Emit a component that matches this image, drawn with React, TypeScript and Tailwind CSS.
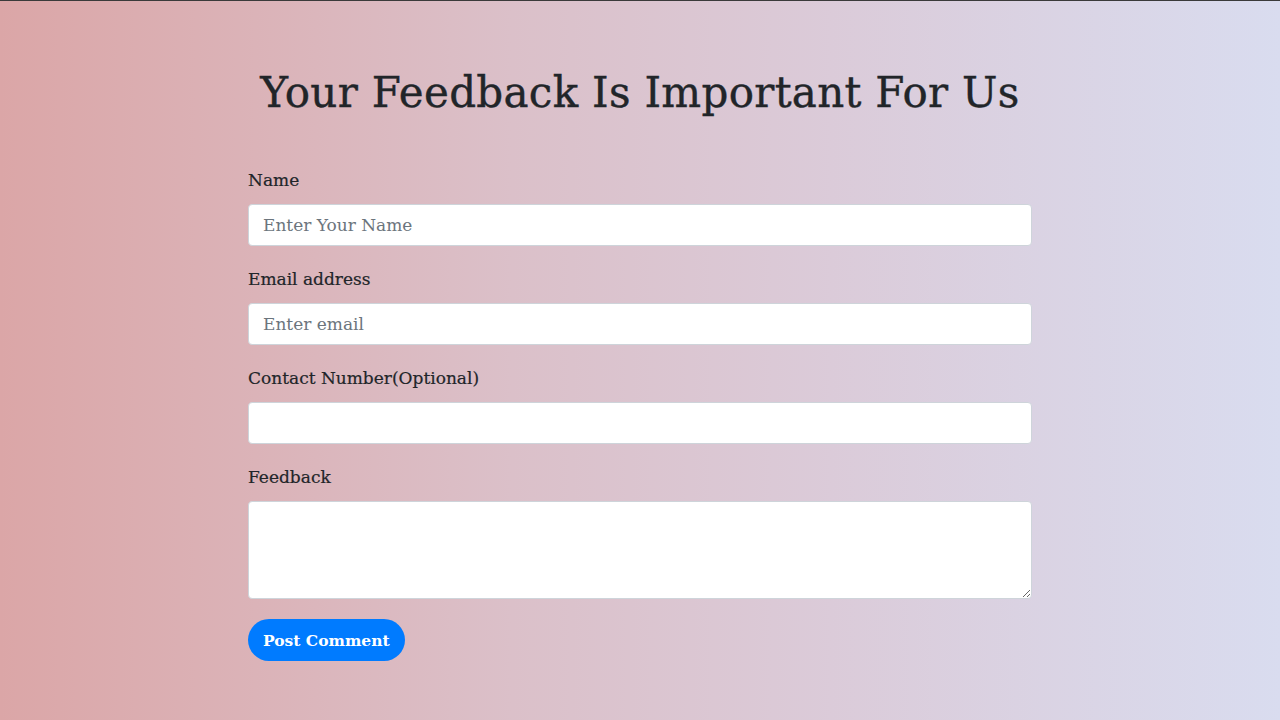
import React from 'react';

const serif = { fontFamily: '"DejaVu Serif", "Liberation Serif", serif' };

export default function App() {
  const fields = [
    { id: 'name', label: 'Name', placeholder: 'Enter Your Name' },
    { id: 'email', label: 'Email address', placeholder: 'Enter email' },
    { id: 'contact', label: 'Contact Number(Optional)', placeholder: '' },
  ];

  return (
    <div
      className="min-h-screen w-full border-t border-[#3a3a3a] bg-[linear-gradient(to_right,#dba6a7,#dbc0c9_40%,#dbcbd9_65%,#d9dcef)] text-[#212529]"
      style={serif}
    >
      <div className="mx-auto w-[784px] pt-[67px]">
        <h1 className="text-center text-[42px] leading-[1.2] font-normal tracking-[0.3px] mb-[49px] [-webkit-text-stroke:0.4px_#212529]">
          Your Feedback Is Important For Us
        </h1>

        <form onSubmit={e => e.preventDefault()}>
          {fields.map(f => (
            <div key={f.id} className="mb-[20px]">
              <label htmlFor={f.id} className="block text-[17px] leading-[27px] mb-[10px] [-webkit-text-stroke:0.2px_#212529]">
                {f.label}
              </label>
              <input
                id={f.id}
                placeholder={f.placeholder}
                className="block w-full h-[42px] rounded-[4px] border border-[#ced4da] bg-white px-[14px] text-[17px] text-[#495057] placeholder:text-[#6c757d] outline-none"
                style={serif}
              />
            </div>
          ))}

          <div className="mb-[20px]">
            <label htmlFor="feedback" className="block text-[17px] leading-[27px] mb-[10px] [-webkit-text-stroke:0.2px_#212529]">
              Feedback
            </label>
            <textarea
              id="feedback"
              className="block w-full h-[98px] rounded-[4px] border border-[#ced4da] bg-white px-[14px] py-[8px] text-[17px] outline-none"
              style={serif}
            />
          </div>

          <button
            type="submit"
            className="h-[42px] px-[15px] rounded-full bg-[#007bff] text-white text-[15.5px] font-bold"
            style={serif}
          >
            Post Comment
          </button>
        </form>
      </div>
    </div>
  );
}
